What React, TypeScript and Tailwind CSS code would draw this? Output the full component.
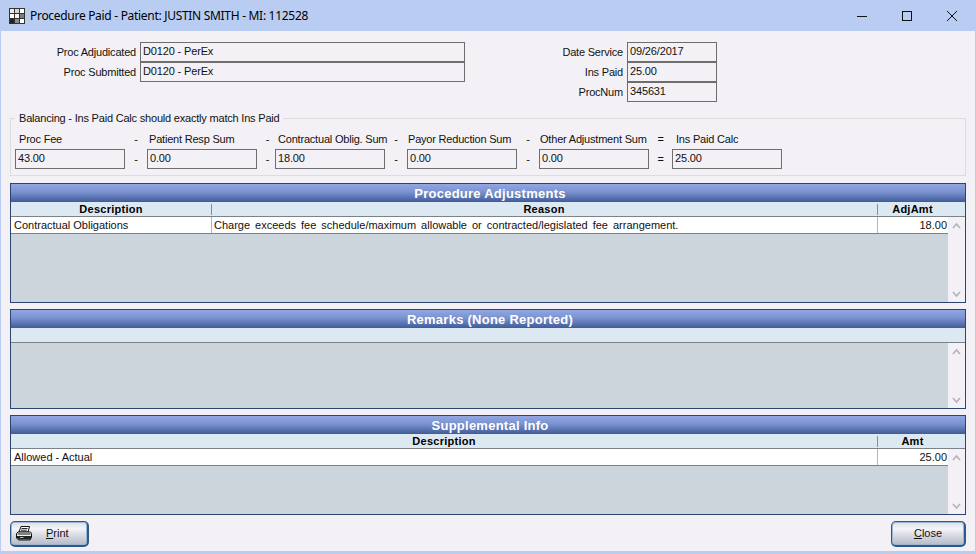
const ui = "font-['Liberation_Sans',Arial,sans-serif]";

function Field({ value, className }: { value: string; className: string }) {
  return (
    <div className={`h-5 border border-[#6e6e6e] bg-[#f3f1f5] pl-[2px] text-[11px] leading-[16px] tracking-[-0.15px] text-[#111] ${className}`}>
      {value}
    </div>
  );
}

function Label({ text }: { text: string }) {
  return <div className="h-5 pr-[4px] text-right text-[11px] leading-[21px] tracking-[-0.2px] text-[#111]">{text}</div>;
}

function Chevron({ up }: { up?: boolean }) {
  return (
    <svg viewBox="0 0 9 7" className="h-[7px] w-[9px]" fill="none" stroke="#b4b4b8" strokeWidth="1.6">
      <path d={up ? "M1 6L4.5 2L8 6" : "M1 1L4.5 5L8 1"} />
    </svg>
  );
}

type Column = { title: string; width: string };

function Panel({
  title,
  columns,
  cells,
  height,
  wideWords,
}: {
  title: string;
  columns?: Column[];
  cells?: string[];
  height: string;
  wideWords?: boolean;
}) {
  return (
    <section className={`flex flex-col border border-[#2b4470] ${height}`}>
      <div className="h-[18px] shrink-0 bg-[linear-gradient(#92a7e2,#7a92cf_45%,#3f5b98)] pl-[4px] text-center text-[13px] font-bold leading-[19px] tracking-[0.25px] text-white">
        {title}
      </div>
      <div className="flex h-[15px] shrink-0 border-b border-[#7d8287] bg-[#dde9f2] text-[11px] font-bold leading-[15px] tracking-[0.25px] text-black">
        {columns?.map((c, i) => (
          <div key={c.title} className={`${c.width} ${i > 0 ? "relative" : ""} text-center`}>
            {i > 0 && <span className="absolute left-0 top-[2px] h-[11px] w-px bg-[#8b8f92]" />}
            {c.title}
          </div>
        ))}
      </div>
      <div className="flex min-h-0 flex-1">
        <div className="min-w-0 flex-1 bg-[#cdd5dc]">
          {cells && columns && (
            <div className="flex h-[17px] border-b border-[#7d8287] bg-white text-[11px] leading-[16px] text-[#111]">
              {cells.map((v, i) => (
                <div
                  key={v}
                  className={`${columns[i].width} ${i > 0 ? "border-l border-[#b4b6b8]" : ""} ${
                    i === cells.length - 1 ? "pr-[1px] text-right" : i === 0 ? "pl-[3px]" : "pl-[2px]"
                  } ${wideWords && i === 1 ? "whitespace-nowrap [word-spacing:1.95px]" : "whitespace-nowrap"}`}
                >
                  {v}
                </div>
              ))}
            </div>
          )}
        </div>
        <div className="flex w-[17px] shrink-0 flex-col items-center justify-between bg-[#f3f1f5] pb-[4px] pt-[5px]">
          <Chevron up />
          <Chevron />
        </div>
      </div>
    </section>
  );
}

function WindowIcon() {
  const cells = ["#ececec", "#d8d8d8", "#ffffff", "#ffffff", "#f4f4f4", "#7c7c7c", "#222222", "#8a8a8a", "#ffffff"];
  return (
    <svg viewBox="0 0 16 16" className="h-4 w-4" shapeRendering="crispEdges">
      <rect width="16" height="16" fill="#333" />
      {cells.map((fill, i) => (
        <rect key={i} x={1 + (i % 3) * 5} y={1 + Math.floor(i / 3) * 5} width="4" height="4" fill={fill} />
      ))}
    </svg>
  );
}

function PrinterIcon() {
  return (
    <svg viewBox="0 0 16 15" className="h-[15px] w-4">
      <path d="M5 .5h8.5L12 6H3z" fill="#fff" stroke="#111" />
      <path d="M5.5 2.5h6M4.8 4.2h6" stroke="#111" strokeWidth="0.9" />
      <path d="M2 6h12.5l1 1.5v4L14 14H2.5L.5 12V7.5z" fill="#f2f2f2" stroke="#111" />
      <path d="M1 10h14v3.4H2.6L1 12z" fill="#222" />
      <path d="M1.5 8h13" stroke="#111" />
      <path d="M4 11.5h3.5" stroke="#c9c94c" />
    </svg>
  );
}

function WinButton({ children, className }: { children: React.ReactNode; className: string }) {
  return (
    <button className={`flex h-[26px] items-center rounded-[5px] border border-b-2 border-r-2 border-[#2c5a8e] bg-[linear-gradient(#dcdfe8,#f4f4f8_30%,#d6d8e2_60%,#b6bac9)] text-[11px] text-[#111] shadow-[inset_0_0_0_1px_#9fb6cf] ${className}`}>
      {children}
    </button>
  );
}

export default function App() {
  const balance = [
    ["Proc Fee", "43.00", "-", "pl-[4px]", ""],
    ["Patient Resp Sum", "0.00", "-", "pl-[2px]", "pl-[3px]"],
    ["Contractual Oblig. Sum", "18.00", "-", "pl-[3px]", ""],
    ["Payor Reduction Sum", "0.00", "-", "pl-[1px]", ""],
    ["Other Adjustment Sum", "0.00", "=", "pl-[1px]", ""],
    ["Ins Paid Calc", "25.00", "", "pl-[4px]", ""],
  ];

  return (
    <div className={`flex h-[554px] w-[976px] flex-col bg-[#b9cdf3] ${ui}`}>
      <header className="flex h-[31px] shrink-0 items-center pl-[9px] text-black">
        <WindowIcon />
        <span className="ml-[5px] flex-1 font-['Noto_Sans',sans-serif] text-[12px] tracking-[-0.3px]">
          Procedure Paid - Patient: JUSTIN SMITH - MI: 112528
        </span>
        <div className="flex items-center">
          <svg viewBox="0 0 10 10" className="mr-[35px] h-[10px] w-[10px]" stroke="#111" fill="none" shapeRendering="crispEdges">
            <path d="M0 5.5h10" />
          </svg>
          <svg viewBox="0 0 10 10" className="mr-[35px] h-[10px] w-[10px]" stroke="#111" fill="none" shapeRendering="crispEdges">
            <rect x="0.5" y="0.5" width="9" height="9" />
          </svg>
          <svg viewBox="0 0 10 10" className="mr-[19px] h-[10px] w-[10px]" stroke="#111" fill="none">
            <path d="M0 0l10 10M10 0L0 10" />
          </svg>
        </div>
      </header>

      <main className="mx-[1px] flex h-[520px] flex-col bg-[#f3f1f5] px-[9px] pt-[11px] text-[#111]">
        <div className="flex h-[70px] shrink-0">
          <div className="w-[130px]">
            <Label text="Proc Adjudicated" />
            <Label text="Proc Submitted" />
          </div>
          <div className="w-[325px]">
            <Field value="D0120 - PerEx" className="w-full" />
            <Field value="D0120 - PerEx" className="w-full" />
          </div>
          <div className="ml-[61px] w-[101px]">
            <Label text="Date Service" />
            <Label text="Ins Paid" />
            <Label text="ProcNum" />
          </div>
          <div className="w-[90px]">
            <Field value="09/26/2017" className="w-full" />
            <Field value="25.00" className="w-full" />
            <Field value="345631" className="w-full" />
          </div>
        </div>

        <fieldset className="h-[64px] shrink-0 border border-[#dcdcdc] pl-[4px]">
          <legend className="px-[4px] text-[11px] leading-[13px] tracking-[-0.2px]">
            Balancing - Ins Paid Calc should exactly match Ins Paid
          </legend>
          <div className="mt-[7px] grid grid-cols-[110px_22px_110px_18px_110px_22px_110px_22px_110px_23px_110px] text-[11px] tracking-[-0.2px]">
            {balance.map(([label, , sep, pad, sepPad]) => (
              <div key={label} className="contents">
                <div className={`h-[17px] whitespace-nowrap leading-[14px] ${pad}`}>{label}</div>
                {sep ? <div className={`h-[17px] text-center leading-[14px] ${sepPad}`}>{sep}</div> : null}
              </div>
            ))}
            {balance.map(([label, value, sep, , sepPad]) => (
              <div key={label} className="contents">
                <Field value={value} className="w-full" />
                {sep ? <div className={`text-center leading-[21px] ${sepPad}`}>{sep}</div> : null}
              </div>
            ))}
          </div>
        </fieldset>

        <div className="mt-[7px] flex flex-col gap-[6px]">
          <Panel
            title="Procedure Adjustments"
            height="h-[120px]"
            wideWords
            columns={[
              { title: "Description", width: "w-[200px]" },
              { title: "Reason", width: "w-[666px]" },
              { title: "AdjAmt", width: "w-[71px]" },
            ]}
            cells={[
              "Contractual Obligations",
              "Charge exceeds fee schedule/maximum allowable or contracted/legislated fee arrangement.",
              "18.00",
            ]}
          />
          <Panel title="Remarks (None Reported)" height="h-[100px]" />
          <Panel
            title="Supplemental Info"
            height="h-[100px]"
            columns={[
              { title: "Description", width: "w-[866px]" },
              { title: "Amt", width: "w-[71px]" },
            ]}
            cells={["Allowed - Actual", "25.00"]}
          />
        </div>

        <div className="mt-[6px] flex justify-between">
          <WinButton className="w-[79px] pl-[5px]">
            <PrinterIcon />
            <span className="ml-[14px]">
              <u>P</u>rint
            </span>
          </WinButton>
          <WinButton className="w-[75px] justify-center">
            <span>
              <u>C</u>lose
            </span>
          </WinButton>
        </div>
      </main>
    </div>
  );
}
